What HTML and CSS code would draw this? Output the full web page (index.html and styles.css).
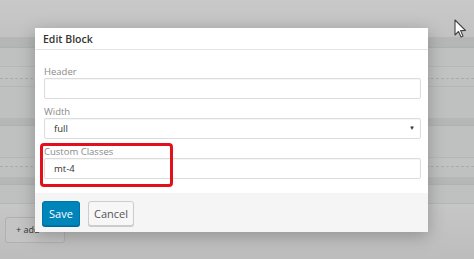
FILE: index.html
```html
<!DOCTYPE html>
<html>
  <head>
    <title>Edit Block</title>
    <link rel="stylesheet" href="styles.css">
  </head>
  <body>
    <div class="backdrop">
      <div class="band top"></div>
      <div class="band bar"></div>
      <div class="band row"></div>
      <div class="band dashed"></div>
      <div class="band row short"></div>
      <div class="band row tall"></div>
      <div class="band bar thin"></div>
      <div class="band row tall"></div>
      <div class="band dashed short"></div>
      <div class="band row mid"></div>
      <div class="band bar thin"></div>
      <div class="band row"></div>
      <div class="band bottom">
        <span class="add-btn">+ add</span>
      </div>
    </div>

    <svg class="cursor" width="14" height="20" viewBox="0 0 14 20">
      <path d="M1 1 L1 16 L4.5 12.5 L7 18 L9 17 L6.6 11.6 L11.5 11.5 Z" fill="#fff" stroke="#444" stroke-width="1.1" stroke-linejoin="round"/>
    </svg>

    <div class="modal">
      <div class="modal-header">Edit Block</div>
      <div class="modal-body">
        <label class="field">
          <span class="field-label">Header</span>
          <span class="input"></span>
        </label>
        <label class="field">
          <span class="field-label">Width</span>
          <span class="input select">full<span class="caret">▼</span></span>
        </label>
        <label class="field">
          <span class="field-label">Custom Classes</span>
          <span class="input">mt-4</span>
        </label>
      </div>
      <div class="modal-footer">
        <button class="btn btn-primary">Save</button>
        <button class="btn">Cancel</button>
      </div>
      <div class="highlight"></div>
    </div>
  </body>
</html>
```

FILE: styles.css
```css
body {
  margin: 0;
  font-family: "Open Sans", Arial, sans-serif;
  width: 474px;
  height: 259px;
  overflow: hidden;
  position: relative;
}
.backdrop {
  height: 259px;
  overflow: hidden;
  background: #c3c4c4;
}
.band {
  border-bottom: 1px solid #b3b9b9;
}
.top {
  height: 37px;
  border: none;
  background: linear-gradient(#c9c9c9, #c2c2c2);
}
.bar {
  height: 10px;
  background: #b5b6b6;
  border-color: #adb2b2;
}
.bar.thin {
  height: 6px;
}
.row {
  height: 18px;
  background: #bfc1c1;
}
.row.short {
  height: 7px;
}
.row.mid {
  height: 10px;
}
.row.tall {
  height: 31px;
}
.dashed {
  height: 11px;
  background: #c1c3c3;
  border-bottom: 1px dashed #a8acac;
}
.dashed.short {
  height: 8px;
}
.bottom {
  height: 43px;
  border: none;
  background: linear-gradient(#c6c6c6, #bdbdbd);
  padding: 12px 5px 0;
}
.add-btn {
  display: inline-block;
  width: 48px;
  height: 24px;
  line-height: 24px;
  padding-left: 10px;
  border: 1px solid #b0b0b0;
  border-radius: 3px;
  background: #c4c4c4;
  font-size: 9px;
  color: #333;
}
.cursor {
  position: absolute;
  left: 454px;
  top: 19px;
}
.modal {
  position: absolute;
  left: 35px;
  top: 28px;
  width: 393px;
  background: #fff;
  box-shadow: 0 4px 16px rgba(0, 0, 0, 0.25);
}
.modal-header {
  height: 21px;
  padding-left: 8px;
  line-height: 22px;
  font-size: 10.5px;
  font-weight: 600;
  color: #333;
  border-bottom: 1px solid #e5e5e5;
}
.modal-body {
  padding: 16px 7px 7px 9px;
}
.field {
  display: block;
  padding-bottom: 7px;
}
.field-label {
  display: block;
  font-size: 9.5px;
  color: #8a8a8a;
  line-height: 12px;
}
.input {
  display: block;
  height: 19px;
  border: 1px solid #dcdcdc;
  border-radius: 2px;
  box-shadow: inset 0 1px 1px rgba(0, 0, 0, 0.04);
  font-size: 9.5px;
  line-height: 19px;
  padding-left: 9px;
  color: #333;
}
.select {
  position: relative;
}
.caret {
  position: absolute;
  right: 5px;
  top: 0;
  font-size: 6px;
  color: #333;
}
.modal-footer {
  background: #f5f5f5;
  padding: 8px 7px 6px 7px;
  display: flex;
  gap: 8px;
}
.btn {
  font-family: "Open Sans", Arial, sans-serif;
  height: 25px;
  padding: 0 5px;
  border: 1px solid #ccc;
  border-radius: 3px;
  background: #f7f7f7;
  color: #555;
  font-size: 11px;
  box-shadow: 0 1px 0 #ccc;
}
.btn-primary {
  width: 38px;
  padding: 0;
  background: #0085ba;
  border-color: #0073aa;
  color: #fff;
  box-shadow: 0 1px 0 #006799;
}
.highlight {
  position: absolute;
  left: 5px;
  top: 115px;
  width: 127px;
  height: 38px;
  border: 3px solid #e3101b;
  border-radius: 4px;
}
```
